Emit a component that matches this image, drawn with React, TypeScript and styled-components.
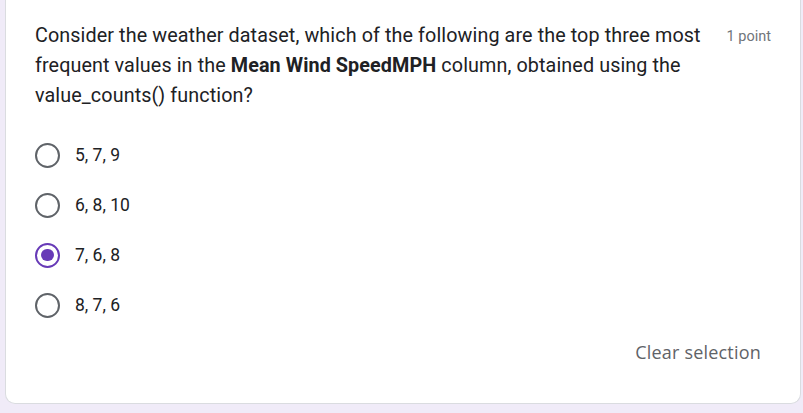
import React, {useState} from 'react';
import styled, {createGlobalStyle} from 'styled-components';

const GlobalStyle = createGlobalStyle`
    html, body {
        margin: 0;
        padding: 0;
        background: #f0ebf8;
    }
    body {
        font-family: Roboto, "Liberation Sans", Arial, sans-serif;
        color: #202124;
    }
`;

const Page = styled.div`
    width: 803px;
    height: 413px;
    padding: 0 2px 9px 5px;
    box-sizing: border-box;
    overflow: hidden;
`;

const Card = styled.div`
    height: 100%;
    box-sizing: border-box;
    background: #fff;
    border: 1px solid #dadce0;
    border-top: none;
    border-radius: 0 0 10px 10px;
    padding: 21px 28px 0 29px;
    display: flex;
    flex-direction: column;
`;

const Header = styled.div`
    display: flex;
    align-items: flex-start;
    gap: 20px;
`;

const Question = styled.div`
    flex: 1;
    font-size: 19.75px;
    line-height: 30px;
    letter-spacing: 0.1px;
    color: #202124;
`;

const Points = styled.div`
    font-size: 14.5px;
    line-height: 30px;
    margin-top: 1px;
    color: #70757a;
    white-space: nowrap;
    padding-right: 1px;
`;

const Options = styled.div`
    display: flex;
    flex-direction: column;
    margin-top: 19px;
`;

const OptionRow = styled.label`
    display: flex;
    align-items: center;
    height: 50px;
    cursor: pointer;
`;

const Radio = styled.span<{checked: boolean}>`
    width: 25px;
    height: 25px;
    box-sizing: border-box;
    border-radius: 50%;
    border: 2.5px solid ${(p) => (p.checked ? '#673ab7' : '#5f6368')};
    display: flex;
    align-items: center;
    justify-content: center;

    &::after {
        content: '';
        width: 12.5px;
        height: 12.5px;
        border-radius: 50%;
        background: #673ab7;
        display: ${(p) => (p.checked ? 'block' : 'none')};
    }
`;

const OptionText = styled.span`
    margin-left: 15px;
    font-size: 17.5px;
    color: #202124;
`;

const Footer = styled.div`
    display: flex;
    justify-content: flex-end;
    margin-top: 2px;
`;

const ClearButton = styled.button`
    background: none;
    border: none;
    font-family: "Open Sans", Roboto, sans-serif;
    font-size: 18px;
    font-weight: 500;
    color: #5f6368;
    padding: 8px 11px;
    letter-spacing: 0.2px;
    cursor: pointer;
`;

const options = ['5, 7, 9', '6, 8, 10', '7, 6, 8', '8, 7, 6'];

const App = () => {
    const [selected, setSelected] = useState<number | null>(2);

    return (
        <Page>
            <GlobalStyle />
            <Card>
                <Header>
                    <Question>
                        Consider the weather dataset, which of the following are the top three most
                        frequent values in the <b>Mean Wind SpeedMPH</b> column, obtained using the
                        value_counts() function?
                    </Question>
                    <Points>1 point</Points>
                </Header>
                <Options>
                    {options.map((opt, i) => (
                        <OptionRow
                            key={opt}
                            onClick={() => setSelected(i)}
                        >
                            <Radio checked={selected === i} />
                            <OptionText>{opt}</OptionText>
                        </OptionRow>
                    ))}
                </Options>
                <Footer>
                    <ClearButton onClick={() => setSelected(null)}>Clear selection</ClearButton>
                </Footer>
            </Card>
        </Page>
    );
};

export default App;
